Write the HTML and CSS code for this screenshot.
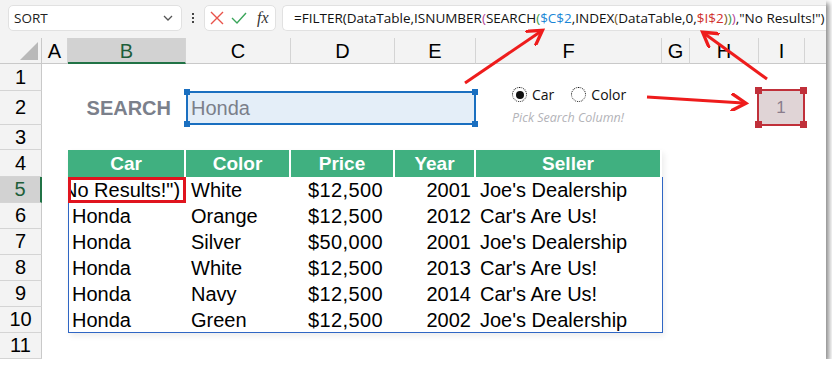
FILE: index.html
```html
<!DOCTYPE html>
<html lang="en">
<head>
    <meta charset="UTF-8">
    <title>FILTER Search</title>
    <link rel="stylesheet" href="styles.css">
</head>
<body>

<div class="window">
    <div class="formula-bar">
        <div class="name-box">
            <span>SORT</span>
            <svg class="chevron" width="10" height="6" viewBox="0 0 10 6"><polyline points="1,1 5,5 9,1" fill="none" stroke="#555" stroke-width="1.3"/></svg>
        </div>
        <div class="dots"><i></i><i></i><i></i></div>
        <div class="fx-box">
            <svg width="14" height="14" viewBox="0 0 14 14"><path d="M1 1 L13 13 M13 1 L1 13" stroke="#e8524a" stroke-width="1.4"/></svg>
            <svg width="16" height="14" viewBox="0 0 16 14"><polyline points="1,7 6,12 15,2" fill="none" stroke="#3aa55a" stroke-width="1.4"/></svg>
            <span class="fx">fx</span>
        </div>
        <div class="formula">=FILTER(DataTable,ISNUMBER<span class="p1">(</span>SEARCH<span class="p2">(</span><span class="ref-c">$C$2</span>,INDEX<span class="p3">(</span>DataTable,0,<span class="ref-i">$I$2</span><span class="p3">)</span><span class="p2">)</span><span class="p1">)</span>,"No Results!")<span class="caret"></span></div>
    </div>

    <div class="sheet">
        <div class="corner"><span></span></div>
        <div class="col-head">A</div>
        <div class="col-head active">B</div>
        <div class="col-head">C</div>
        <div class="col-head">D</div>
        <div class="col-head">E</div>
        <div class="col-head">F</div>
        <div class="col-head">G</div>
        <div class="col-head">H</div>
        <div class="col-head">I</div>
        <div class="col-head last"></div>

        <div class="row-head r1">1</div>
        <div class="row-head r2">2</div>
        <div class="row-head r3">3</div>
        <div class="row-head r4">4</div>
        <div class="row-head r5 active">5</div>
        <div class="row-head r6">6</div>
        <div class="row-head r7">7</div>
        <div class="row-head r8">8</div>
        <div class="row-head r9">9</div>
        <div class="row-head r10">10</div>
        <div class="row-head r11">11</div>

        <div class="search-label">SEARCH</div>
        <div class="search-input">
            Honda
            <span class="handle tl"></span><span class="handle bl"></span>
            <span class="handle tr"></span><span class="handle br"></span>
        </div>

        <div class="radios">
            <div class="radio-row">
                <label class="radio"><span class="dot checked"></span>Car</label>
                <label class="radio"><span class="dot"></span>Color</label>
            </div>
            <div class="hint">Pick Search Column!</div>
        </div>

        <div class="link-cell">
            1
            <span class="handle tl"></span><span class="handle bl"></span>
            <span class="handle tr"></span><span class="handle br"></span>
        </div>

        <div class="data-table">
            <div class="th">Car</div>
            <div class="th">Color</div>
            <div class="th">Price</div>
            <div class="th">Year</div>
            <div class="th">Seller</div>

            <div class="td car editing"><span>No Results!")</span></div>
            <div class="td">White</div>
            <div class="td num price">$12,500</div>
            <div class="td num">2001</div>
            <div class="td seller">Joe's Dealership</div>

            <div class="td car">Honda</div>
            <div class="td">Orange</div>
            <div class="td num price">$12,500</div>
            <div class="td num">2012</div>
            <div class="td seller">Car's Are Us!</div>

            <div class="td car">Honda</div>
            <div class="td">Silver</div>
            <div class="td num price">$50,000</div>
            <div class="td num">2001</div>
            <div class="td seller">Joe's Dealership</div>

            <div class="td car">Honda</div>
            <div class="td">White</div>
            <div class="td num price">$12,500</div>
            <div class="td num">2013</div>
            <div class="td seller">Car's Are Us!</div>

            <div class="td car">Honda</div>
            <div class="td">Navy</div>
            <div class="td num price">$12,500</div>
            <div class="td num">2014</div>
            <div class="td seller">Car's Are Us!</div>

            <div class="td car">Honda</div>
            <div class="td">Green</div>
            <div class="td num price">$12,500</div>
            <div class="td num">2002</div>
            <div class="td seller">Joe's Dealership</div>
        </div>
    </div>

    <svg class="arrows" width="832" height="370" viewBox="0 0 832 370">
        <defs>
            <marker id="head" markerWidth="6" markerHeight="6" refX="4" refY="3" orient="auto" markerUnits="strokeWidth">
                <path d="M0 0 L5 3 L0 6" fill="none" stroke="#ee1c1c" stroke-width="1.1"/>
            </marker>
        </defs>
        <line x1="465" y1="83" x2="540" y2="32" stroke="#ee1c1c" stroke-width="3" marker-end="url(#head)"/>
        <line x1="767" y1="79" x2="705" y2="34" stroke="#ee1c1c" stroke-width="3" marker-end="url(#head)"/>
        <line x1="647" y1="97" x2="743" y2="103" stroke="#ee1c1c" stroke-width="3" marker-end="url(#head)"/>
    </svg>
</div>

</body>
</html>
```

FILE: styles.css
```css
body {
    margin: 0;
    background: #fff;
    font-family: "Liberation Sans", Arial, sans-serif;
}
.window {
    position: relative;
    width: 826px;
    height: 359px;
    background: #fff;
    box-shadow: 3px 3px 5px rgba(0, 0, 0, 0.45);
}

/* formula bar */
.formula-bar {
    height: 38px;
    background: #f3f3f3;
    display: flex;
    align-items: flex-start;
    padding-top: 5px;
    box-sizing: border-box;
    font-family: "Open Sans", sans-serif;
}
.name-box {
    width: 174px;
    height: 26px;
    margin-left: 8px;
    box-sizing: border-box;
    background: #fff;
    border: 1px solid #e1e1e1;
    border-radius: 5px;
    display: flex;
    align-items: center;
    justify-content: space-between;
    padding: 0 8px 0 5px;
    font-size: 13.5px;
    color: #222;
}
.dots {
    width: 22px;
    height: 26px;
    display: flex;
    flex-direction: column;
    align-items: center;
    justify-content: center;
    gap: 2px;
}
.dots i {
    width: 2px;
    height: 2px;
    background: #444;
}
.fx-box {
    width: 72px;
    height: 26px;
    box-sizing: border-box;
    background: #fff;
    border: 1px solid #e1e1e1;
    border-radius: 5px;
    display: flex;
    align-items: center;
    gap: 7px;
    padding-left: 5px;
}
.fx {
    font-family: "Liberation Serif", serif;
    font-style: italic;
    font-size: 16px;
    color: #333;
    margin-left: 3px;
}
.formula {
    flex: 1;
    height: 26px;
    margin-left: 6px;
    box-sizing: border-box;
    background: #fff;
    border: 1px solid #e1e1e1;
    border-right: none;
    border-radius: 5px 0 0 5px;
    padding-left: 11px;
    font-size: 13.5px;
    line-height: 24px;
    color: #111;
    white-space: nowrap;
    overflow: hidden;
}
.p1 { color: #b4479a; }
.p2 { color: #3d9a3d; }
.p3 { color: #7d5a1e; }
.ref-c { color: #1b86d6; }
.ref-i { color: #d0312d; }
.caret {
    display: inline-block;
    width: 1px;
    height: 17px;
    background: #000;
    vertical-align: -3px;
    margin-left: 1px;
}

/* sheet grid */
.sheet {
    display: grid;
    grid-template-columns: 42px 26px 118px 105px 104px 81px 186px 28px 69px 46px 21px;
    grid-template-rows: 26px 27px 34px 25px 27px repeat(7, 26px);
    font-size: 20px;
}
.corner {
    background: #f3f3f3;
    border-right: 1px solid #c9c9c9;
    border-bottom: 1px solid #c9c9c9;
    position: relative;
}
.corner span {
    position: absolute;
    right: 3px;
    bottom: 3px;
    width: 0;
    height: 0;
    border-left: 18px solid transparent;
    border-bottom: 18px solid #b9b9b9;
}
.col-head {
    background: #f3f3f3;
    border-right: 1px solid #d4d4d4;
    border-bottom: 1px solid #c9c9c9;
    text-align: center;
    line-height: 26px;
    color: #000;
}
.col-head.active {
    background: #d2d2d2;
    color: #1e5e3a;
    border-bottom: 2px solid #217346;
}
.col-head.last {
    border-right: none;
}
.row-head {
    grid-column: 1;
    background: #f3f3f3;
    border-right: 1px solid #c9c9c9;
    border-bottom: 1px solid #d4d4d4;
    text-align: center;
    display: flex;
    align-items: center;
    justify-content: center;
}
.row-head.active {
    background: #d2d2d2;
    color: #1e5e3a;
    border-right: 2px solid #217346;
}
.r1 { grid-row: 2; }
.r2 { grid-row: 3; }
.r3 { grid-row: 4; }
.r4 { grid-row: 5; }
.r5 { grid-row: 6; }
.r6 { grid-row: 7; }
.r7 { grid-row: 8; }
.r8 { grid-row: 9; }
.r9 { grid-row: 10; }
.r10 { grid-row: 11; }
.r11 { grid-row: 12; }

/* search row */
.search-label {
    grid-column: 3;
    grid-row: 3;
    text-align: right;
    padding-right: 15px;
    font-weight: bold;
    font-size: 20px;
    color: #7b808b;
    align-self: center;
}
.search-input {
    grid-column: 4 / 7;
    grid-row: 3;
    position: relative;
    background: #e4eef8;
    border: 2px solid #1a6fc0;
    padding-left: 3px;
    color: #7b7f8a;
    display: flex;
    align-items: center;
    font-size: 20px;
}
.handle {
    position: absolute;
    width: 6px;
    height: 6px;
    background: #1a6fc0;
}
.handle.tl { left: -4px; top: -4px; }
.handle.bl { left: -4px; bottom: -4px; }
.handle.tr { right: -4px; top: -4px; }
.handle.br { right: -4px; bottom: -4px; }

.radios {
    grid-column: 7;
    grid-row: 2 / 4;
    padding: 21px 0 0 36px;
    font-family: "Open Sans", sans-serif;
}
.radio-row {
    display: flex;
    gap: 17px;
}
.radio {
    display: flex;
    align-items: center;
    gap: 5px;
    font-size: 14px;
    color: #111;
}
.dot {
    width: 15px;
    height: 15px;
    border-radius: 50%;
    border: 1.5px dotted #111;
    box-sizing: border-box;
    display: flex;
    align-items: center;
    justify-content: center;
}
.dot.checked::after {
    content: "";
    width: 8px;
    height: 8px;
    border-radius: 50%;
    background: #111;
}
.hint {
    margin: 5px 0 0 0;
    font-size: 12.5px;
    font-style: italic;
    color: #b3b3b8;
}

.link-cell {
    grid-column: 10;
    grid-row: 3;
    position: relative;
    margin: -2px 0 -1px -2px;
    background: #e0d4d6;
    border: 2px solid #c0303a;
    color: #8a7c8c;
    font-size: 17px;
    display: flex;
    align-items: center;
    justify-content: center;
}
.link-cell .handle {
    background: #c0303a;
    width: 7px;
    height: 7px;
}

/* data table */
.data-table {
    grid-column: 3 / 8;
    grid-row: 5 / 12;
    display: grid;
    grid-template-columns: 118px 105px 104px 81px 186px;
    grid-template-rows: 27px repeat(6, 26px);
    box-shadow: 2px 3px 6px rgba(0, 0, 0, 0.08);
    position: relative;
}
.th {
    background: #40b080;
    color: #fff;
    font-weight: bold;
    text-align: center;
    line-height: 27px;
    border-right: 2px solid #fff;
    font-size: 19px;
}
.th:last-child {
    border-right: none;
    margin-right: -1px;
}
.td {
    line-height: 27px;
    padding-left: 5px;
    white-space: nowrap;
}
.td.car {
    border-left: 1px solid #2f66c4;
    padding-left: 3px;
}
.td.seller {
    border-right: 1px solid #2f66c4;
    padding-left: 4px;
    margin-right: -1px;
}
.data-table .td:nth-last-child(-n+5) {
    border-bottom: 1px solid #2f66c4;
    line-height: 26px;
}
.td.num {
    text-align: right;
    padding-right: 5px;
}
.td.price {
    padding-right: 12px;
    letter-spacing: 0.4px;
}
.td.editing {
    overflow: hidden;
    direction: rtl;
    text-align: left;
    padding: 0 4px 0 0;
    outline: 3px solid #e0141e;
    outline-offset: -3px;
}
.td.editing span {
    direction: ltr;
    unicode-bidi: bidi-override;
    display: inline-block;
    margin-left: -6px;
}

.arrows {
    position: absolute;
    left: 0;
    top: 0;
    pointer-events: none;
}
```
